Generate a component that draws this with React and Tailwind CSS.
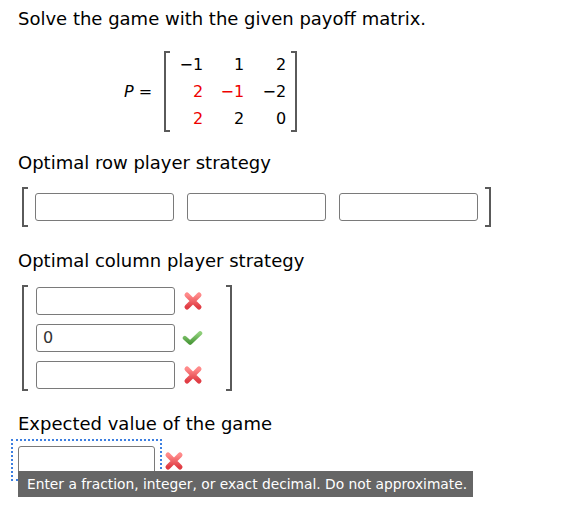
import React from "react";

const XIcon = () => (
  <svg width="20" height="20" viewBox="0 0 20 20" className="block">
    <defs>
      <linearGradient id="xg" x1="0" y1="0" x2="0" y2="1">
        <stop offset="0" stopColor="#ff8a8a" />
        <stop offset="1" stopColor="#e03c44" />
      </linearGradient>
    </defs>
    <path d="M4 4 L16 16 M16 4 L4 16" stroke="url(#xg)" strokeWidth="5" strokeLinecap="round" />
  </svg>
);

const CheckIcon = () => (
  <svg width="22" height="18" viewBox="0 0 22 18" className="block">
    <defs>
      <linearGradient id="cg" x1="0" y1="0" x2="0" y2="1">
        <stop offset="0" stopColor="#8fcf7a" />
        <stop offset="1" stopColor="#4c9a3c" />
      </linearGradient>
    </defs>
    <path d="M3 9 L8.5 14 L19 4" stroke="url(#cg)" strokeWidth="4.5" strokeLinecap="round" strokeLinejoin="round" fill="none" />
  </svg>
);

const LB = ({ cls = "" }) => (
  <div className={`w-[6px] self-stretch border-l-2 border-t-2 border-b-2 border-[#5a5a5a] ${cls}`} />
);
const RB = ({ cls = "" }) => (
  <div className={`w-[6px] self-stretch border-r-2 border-t-2 border-b-2 border-[#5a5a5a] ${cls}`} />
);

const Input = ({ value = "", w = "w-[139px]" }) => (
  <div className={`${w} h-[28px] border border-[#7a7a7a] rounded-[3px] bg-white flex items-center pl-[6px] text-[16px] text-[#333]`}>
    {value}
  </div>
);

export default function App() {
  const rows = [
    [["−1", ""], ["1", ""], ["2", ""]],
    [["2", "r"], ["−1", "r"], ["−2", ""]],
    [["2", "r"], ["2", ""], ["0", ""]],
  ];
  return (
    <div className="w-[587px] h-[508px] bg-white text-black font-['DejaVu_Sans',sans-serif] pl-[18px] overflow-hidden">
      <p className="pt-[8px] text-[18px] leading-[22px]">Solve the game with the given payoff matrix.</p>

      <div className="mt-[21px] flex items-center ml-[106px] text-[16px]">
        <span className="mr-[12px]"><i>P</i> =</span>
        <div className="flex">
          <LB />
          <div className="grid grid-cols-[33px_41px_42px] pr-[5px]">
            {rows.flat().map(([t, c], i) => (
              <div key={i} className={`h-[27px] leading-[27px] text-right ${c === "r" ? "text-[#ee0000]" : ""}`}>{t}</div>
            ))}
          </div>
          <RB />
        </div>
      </div>

      <p className="mt-[20px] text-[18px] leading-[22px]">Optimal row player strategy</p>
      <div className="mt-[13px] flex items-center h-[40px] ml-[4px]">
        <LB />
        <div className="flex gap-[13px] mx-[7px]">
          <Input />
          <Input />
          <Input />
        </div>
        <RB />
      </div>

      <p className="mt-[23px] text-[18px] leading-[22px]">Optimal column player strategy</p>
      <div className="mt-[13px] flex ml-[4px]">
        <LB />
        <div className="flex flex-col gap-[9px] py-[2px] ml-[8px] mr-[23px]">
          {[["", "x"], ["0", "c"], ["", "x"]].map(([v, k], i) => (
            <div key={i} className="flex items-center gap-[7px]">
              <Input value={v} />
              <div className="w-[21px] flex justify-center">{k === "x" ? <XIcon /> : <CheckIcon />}</div>
            </div>
          ))}
        </div>
        <RB />
      </div>

      <p className="mt-[22px] text-[18px] leading-[22px]">Expected value of the game</p>
      <div className="relative mt-[4px] flex items-center">
        <div className="-ml-[7px] border-2 border-dotted border-[#3d7fe0] p-[5px]">
          <Input w="w-[137px]" />
        </div>
        <div className="ml-[2px] mt-[2px]"><XIcon /></div>
        <div className="absolute left-0 top-[32px] w-[455px] h-[26px] bg-[#666666] text-white text-[13.8px] leading-[26px] pl-[9px] whitespace-nowrap">
          Enter a fraction, integer, or exact decimal. Do not approximate.
        </div>
      </div>
    </div>
  );
}
